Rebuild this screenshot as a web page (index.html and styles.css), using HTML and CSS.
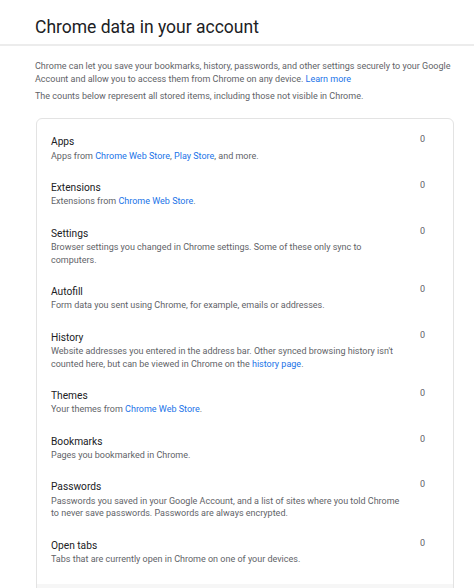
FILE: index.html
```html
<!DOCTYPE html>
<html>
<head>
<meta charset="utf-8">
<link rel="stylesheet" href="styles.css">
</head>
<body>
<header class="top">
  <h1 class="title">Chrome data in your account</h1>
</header>
<main class="main">
  <p class="intro">Chrome can let you save your bookmarks, history, passwords, and other settings securely to your Google Account and allow you to access them from Chrome on any device. <a href="#">Learn more</a></p>
  <p class="intro">The counts below represent all stored items, including those not visible in Chrome.</p>
  <section class="card">
    <div class="row">
      <div class="info"><div class="name">Apps</div><div class="desc">Apps from <a href="#">Chrome Web Store</a>, <a href="#">Play Store</a>, and more.</div></div>
      <div class="count">0</div>
    </div>
    <div class="row">
      <div class="info"><div class="name">Extensions</div><div class="desc">Extensions from <a href="#">Chrome Web Store</a>.</div></div>
      <div class="count">0</div>
    </div>
    <div class="row">
      <div class="info"><div class="name">Settings</div><div class="desc">Browser settings you changed in Chrome settings. Some of these only sync to computers.</div></div>
      <div class="count">0</div>
    </div>
    <div class="row">
      <div class="info"><div class="name">Autofill</div><div class="desc">Form data you sent using Chrome, for example, emails or addresses.</div></div>
      <div class="count">0</div>
    </div>
    <div class="row">
      <div class="info"><div class="name">History</div><div class="desc">Website addresses you entered in the address bar. Other synced browsing history isn't counted here, but can be viewed in Chrome on the <a href="#">history page</a>.</div></div>
      <div class="count">0</div>
    </div>
    <div class="row">
      <div class="info"><div class="name">Themes</div><div class="desc">Your themes from <a href="#">Chrome Web Store</a>.</div></div>
      <div class="count">0</div>
    </div>
    <div class="row">
      <div class="info"><div class="name">Bookmarks</div><div class="desc">Pages you bookmarked in Chrome.</div></div>
      <div class="count">0</div>
    </div>
    <div class="row">
      <div class="info"><div class="name">Passwords</div><div class="desc">Passwords you saved in your Google Account, and a list of sites where you told Chrome to never save passwords. Passwords are always encrypted.</div></div>
      <div class="count">0</div>
    </div>
    <div class="row">
      <div class="info"><div class="name">Open tabs</div><div class="desc">Tabs that are currently open in Chrome on one of your devices.</div></div>
      <div class="count">0</div>
    </div>
    <div class="footer"></div>
  </section>
</main>
</body>
</html>
```
FILE: styles.css
```css
html, body {
  margin: 0;
  padding: 0;
  background: #fff;
  font-family: Roboto, "Liberation Sans", Arial, sans-serif;
  color: #202124;
}
.top {
  border-bottom: 2px solid #ececec;
  padding: 15px 0 0 35px;
  height: 29px;
}
.title {
  margin: 0;
  font-size: 17.5px;
  font-weight: 400;
  line-height: 24px;
  color: #202124;
}
.main {
  padding: 14px 16px 0 35px;
}
.intro {
  margin: 0 0 4px;
  font-size: 9px;
  line-height: 13px;
  color: #5f6368;
}
a {
  color: #1a73e8;
  text-decoration: none;
}
.card {
  margin: 15px 0 0 1px;
  width: 416px;
  border: 1px solid #e3e3e3;
  border-radius: 6px;
  overflow: hidden;
}
.row {
  display: flex;
  justify-content: space-between;
  align-items: flex-start;
  padding: 0 28px 18.75px 14px;
}
.row:first-child {
  padding-top: 16px;
}
.info {
  width: 352px;
}
.name {
  font-size: 10.2px;
  line-height: 14.5px;
  color: #202124;
}
.desc {
  font-size: 9px;
  line-height: 12.5px;
  color: #5f6368;
}
.count {
  font-size: 9px;
  line-height: 13px;
  color: #5f6368;
  margin-top: -2px;
}
.footer {
  height: 20px;
  background: #f6f6f6;
}
```
